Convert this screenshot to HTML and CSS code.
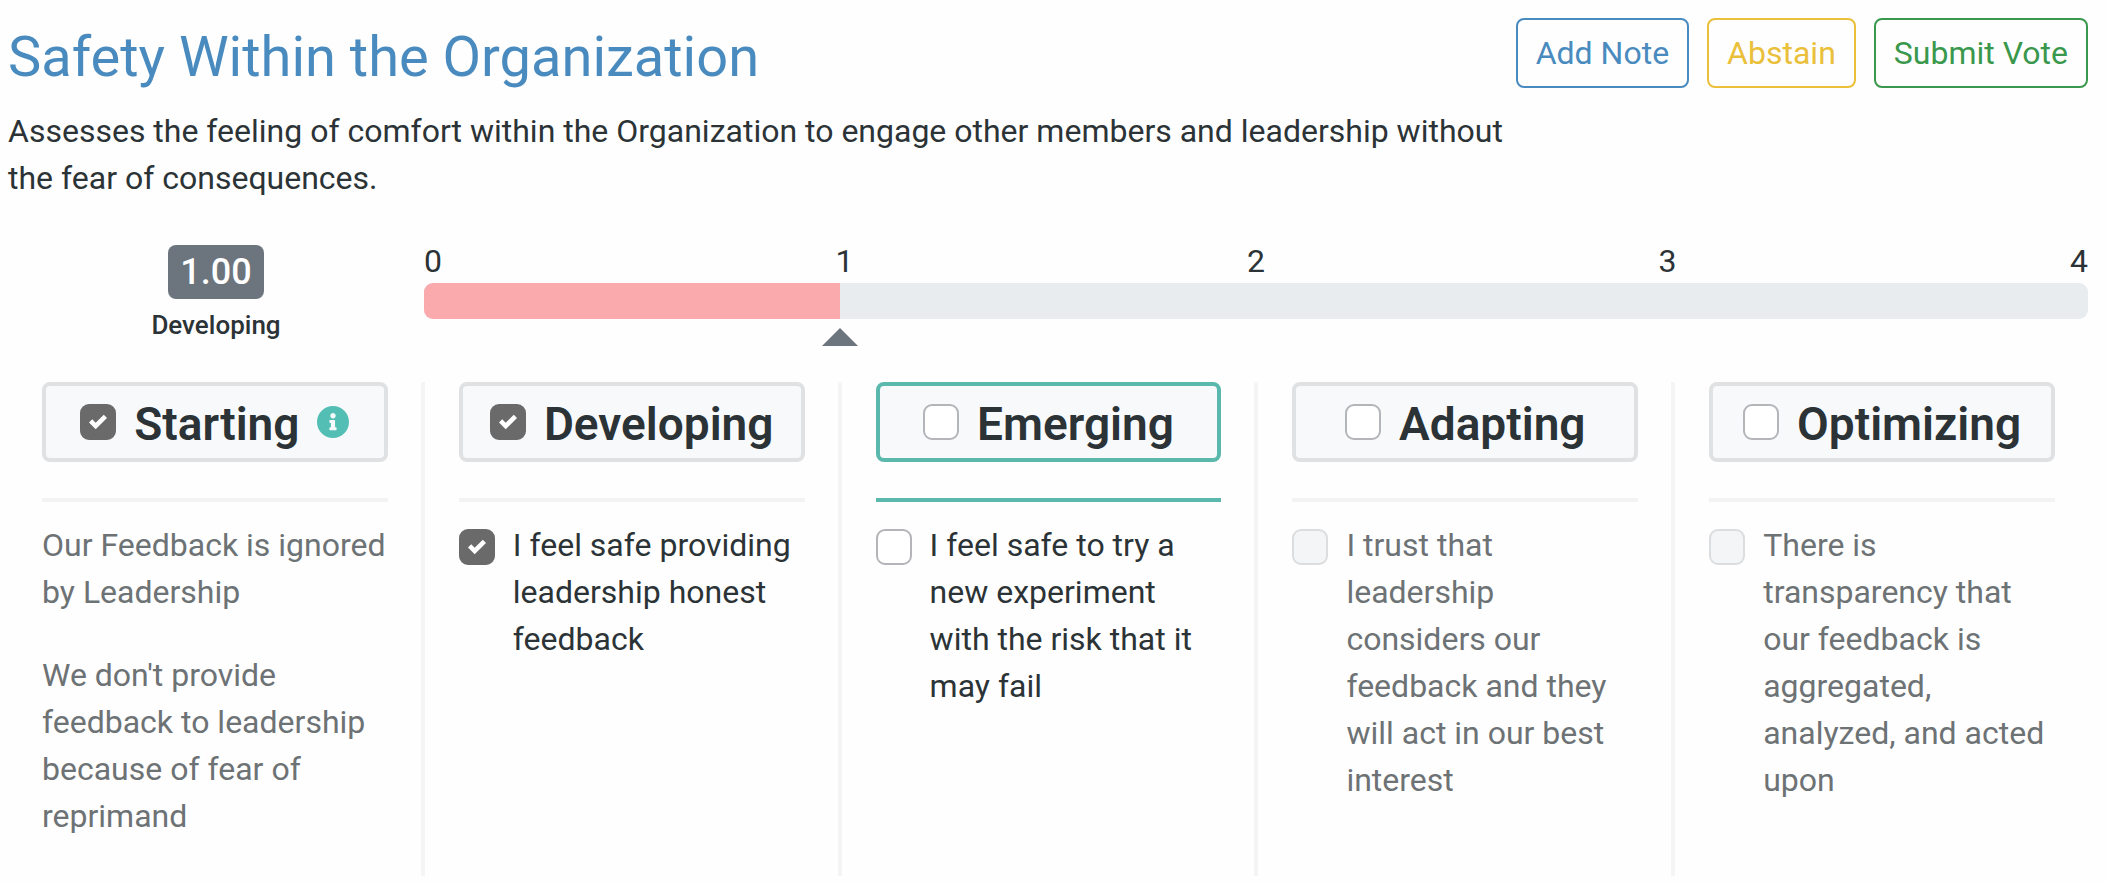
FILE: index.html
```html
<!DOCTYPE html>
<html lang="en">
    <head>
        <title>Safety Within the Organization</title>
        <meta charset="UTF-8">
        <meta name="viewport" content="width=device-width, initial-scale=1">
        <link rel="stylesheet" href="styles.css">
    </head>
    <body>
        <header class="topbar">
            <div class="intro">
                <h1>Safety Within the Organization</h1>
                <p>Assesses the feeling of comfort within the Organization to engage other members and leadership without the fear of consequences.</p>
            </div>
            <div class="actions">
                <button type="button" class="btn btn-note">Add Note</button>
                <button type="button" class="btn btn-abstain">Abstain</button>
                <button type="button" class="btn btn-submit">Submit Vote</button>
            </div>
        </header>

        <section class="score">
            <div class="score-value">
                <span class="badge">1.00</span>
                <span class="score-name">Developing</span>
            </div>
            <div class="scale">
                <div class="scale-numbers">
                    <span>0</span><span>1</span><span>2</span><span>3</span><span>4</span>
                </div>
                <div class="progress">
                    <div class="progress-fill" style="width: 25%"></div>
                </div>
                <div class="pointer" style="width: 25%"></div>
            </div>
        </section>

        <main class="board">
            <section class="level">
                <div class="level-title">
                    <input type="checkbox" id="starting" checked>
                    <label for="starting">Starting</label>
                    <svg class="info" viewBox="8 8 496 496" aria-hidden="true"><path fill="currentColor" d="M256 8C119.043 8 8 119.083 8 256c0 136.997 111.043 248 248 248s248-111.003 248-248C504 119.083 392.957 8 256 8zm0 110c23.196 0 42 18.804 42 42s-18.804 42-42 42-42-18.804-42-42 18.804-42 42-42zm56 254c0 6.627-5.373 12-12 12h-88c-6.627 0-12-5.373-12-12v-24c0-6.627 5.373-12 12-12h12v-64h-12c-6.627 0-12-5.373-12-12v-24c0-6.627 5.373-12 12-12h64c6.627 0 12 5.373 12 12v100h12c6.627 0 12 5.373 12 12v24z"/></svg>
                </div>
                <hr>
                <p>Our Feedback is ignored by Leadership</p>
                <p>We don't provide feedback to leadership because of fear of reprimand</p>
            </section>

            <section class="level">
                <div class="level-title">
                    <input type="checkbox" id="developing" checked>
                    <label for="developing">Developing</label>
                </div>
                <hr>
                <div class="option">
                    <input type="checkbox" id="developing-1" checked>
                    <label for="developing-1">I feel safe providing leadership honest feedback</label>
                </div>
            </section>

            <section class="level current">
                <div class="level-title">
                    <input type="checkbox" id="emerging">
                    <label for="emerging">Emerging</label>
                </div>
                <hr>
                <div class="option">
                    <input type="checkbox" id="emerging-1">
                    <label for="emerging-1">I feel safe to try a new experiment with the risk that it may fail</label>
                </div>
            </section>

            <section class="level">
                <div class="level-title">
                    <input type="checkbox" id="adapting">
                    <label for="adapting">Adapting</label>
                </div>
                <hr>
                <div class="option">
                    <input type="checkbox" id="adapting-1" disabled>
                    <label for="adapting-1">I trust that leadership considers our feedback and they will act in our best interest</label>
                </div>
            </section>

            <section class="level">
                <div class="level-title">
                    <input type="checkbox" id="optimizing">
                    <label for="optimizing">Optimizing</label>
                </div>
                <hr>
                <div class="option">
                    <input type="checkbox" id="optimizing-1" disabled>
                    <label for="optimizing-1">There is transparency that our feedback is aggregated, analyzed, and acted upon</label>
                </div>
            </section>
        </main>
    </body>
</html>
```
FILE: styles.css
```css
* {
    box-sizing: border-box;
}
body {
    margin: 0;
    padding: 18px 19px 6px 8px;
    font-family: Roboto, "Noto Sans", sans-serif;
    font-size: 32px;
    line-height: 47px;
    color: #2b3336;
    background-color: #fefefe;
}
h1, p {
    margin: 0;
}

/* Header */
.topbar {
    display: flex;
    align-items: flex-start;
    justify-content: space-between;
}
.intro {
    width: 73%;
}
h1 {
    font-size: 56px;
    font-weight: 400;
    line-height: 78px;
    color: #4a8bbf;
}
.intro p {
    margin-top: 12px;
}
.actions {
    display: flex;
    gap: 18px;
}
.btn {
    height: 70px;
    padding: 0 18px;
    border: 2px solid;
    border-radius: 8px;
    font: inherit;
    white-space: nowrap;
    background-color: transparent;
    cursor: pointer;
}
.btn-note {
    color: #4a8bbf;
}
.btn-abstain {
    color: #eac03a;
}
.btn-submit {
    color: #3a984d;
}

/* Score */
.score {
    display: grid;
    grid-template-columns: 1fr 4fr;
    margin-top: 36px;
}
.score-value {
    display: flex;
    flex-direction: column;
    align-items: center;
    padding-top: 7px;
}
.badge {
    padding: 0 12px;
    border-radius: 8px;
    font-size: 36px;
    font-weight: 500;
    line-height: 54px;
    color: #fff;
    background-color: #6c757d;
}
.score-name {
    margin-top: 10px;
    font-size: 26px;
    font-weight: 500;
    line-height: 32px;
}
.scale-numbers {
    display: flex;
    justify-content: space-between;
    height: 45px;
}
.progress {
    height: 36px;
    border-radius: 9px;
    overflow: hidden;
    background-color: #e9ecef;
}
.progress-fill {
    height: 100%;
    background-color: #faa9ac;
}
.pointer {
    display: flex;
    justify-content: flex-end;
    margin-top: 9px;
}
.pointer::after {
    content: "";
    margin-right: -18px;
    border: 18px solid transparent;
    border-top-width: 0;
    border-bottom-color: #6c757d;
}

/* Levels */
.board {
    display: grid;
    grid-template-columns: repeat(5, 1fr);
    margin: 36px -4px 0 0;
}
.level {
    padding: 0 33px 0 34px;
    border-right: 4px solid #f5f5f6;
}
.level:last-child {
    border-right-color: transparent;
}
.level-title {
    display: flex;
    align-items: center;
    justify-content: center;
    gap: 18px;
    height: 80px;
    border: 4px solid #dfe1e3;
    border-radius: 8px;
    font-size: 46px;
    font-weight: 600;
    background-color: #f8f9fb;
}
.level-title label {
    padding-top: 4px;
}
.info {
    width: 32px;
    height: 32px;
    color: #53beb4;
}
hr {
    height: 4px;
    margin: 36px 0 20px;
    border: none;
    background-color: #f3f3f4;
}
.current .level-title {
    border-color: #5ab8ac;
}
.current hr {
    background-color: #5ab8ac;
}
.level p {
    margin-bottom: 36px;
    color: #6d7275;
}
.option {
    display: flex;
    align-items: flex-start;
    gap: 18px;
}
input[type="checkbox"] {
    appearance: none;
    flex: none;
    width: 36px;
    height: 36px;
    margin: 0;
    border: 2px solid #b3b5b9;
    border-radius: 9px;
    background-color: #fff;
}
.option input[type="checkbox"] {
    margin-top: 7px;
}
input[type="checkbox"]:checked {
    border-color: #6a6a6a;
    background: #6a6a6a url("data:image/svg+xml,%3csvg xmlns='http://www.w3.org/2000/svg' viewBox='0 0 8 8'%3e%3cpath fill='%23fff' d='M6.564.75l-3.59 3.612-1.538-1.55L0 4.26l2.974 2.99L8 2.193z'/%3e%3c/svg%3e") center / 18px 18px no-repeat;
}
input[type="checkbox"]:disabled {
    border-color: #dcdddf;
    background-color: #f3f5f6;
}
input[type="checkbox"]:disabled + label {
    color: #6d7275;
}
```
